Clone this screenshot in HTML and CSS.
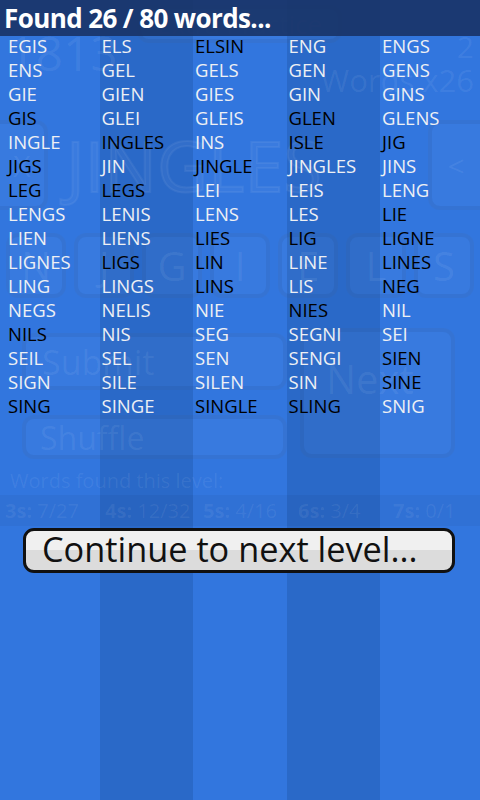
FILE: index.html
```html
<!DOCTYPE html>
<html>
<head>
<meta charset="utf-8">
<link rel="stylesheet" href="styles.css">
</head>
<body>
<div class="game">
  <div class="hdr">
    <div class="score">1813</div>
    <div class="gbtn xp">Extra Practice</div>
    <div class="right"><div class="lvl">2</div><div class="mult">Words x26</div></div>
  </div>
  <div class="wordrow">
    <div class="gbtn side">X</div>
    <div class="big">JINGLES</div>
    <div class="gbtn side r">&lt;</div>
  </div>
  <div class="tiles">
    <div class="gbtn tile">N</div><div class="gbtn tile">J</div><div class="gbtn tile">G</div><div class="gbtn tile">I</div><div class="gbtn tile">E</div><div class="gbtn tile">L</div><div class="gbtn tile">S</div>
  </div>
  <div class="actions">
    <div class="lcol">
      <div class="gbtn submit">Submit</div>
      <div class="gbtn shuffle">Shuffle</div>
    </div>
    <div class="gbtn next">Next</div>
  </div>
  <div class="found">Words found this level:</div>
  <div class="stats">
    <span><b>3s:</b> 7/27</span><span><b>4s:</b> 12/32</span><span><b>5s:</b> 4/16</span><span><b>6s:</b> 3/4</span><span><b>7s:</b> 0/1</span>
  </div>
</div>
<div class="dialog">
  <div class="title">Found 26 / 80 words...</div>
  <div class="words">
    <span class="w">EGIS</span><span class="w">ELS</span><span class="k">ELSIN</span><span class="w">ENG</span><span class="w">ENGS</span>
    <span class="w">ENS</span><span class="w">GEL</span><span class="w">GELS</span><span class="w">GEN</span><span class="w">GENS</span>
    <span class="w">GIE</span><span class="w">GIEN</span><span class="w">GIES</span><span class="w">GIN</span><span class="w">GINS</span>
    <span class="k">GIS</span><span class="w">GLEI</span><span class="w">GLEIS</span><span class="k">GLEN</span><span class="w">GLENS</span>
    <span class="w">INGLE</span><span class="k">INGLES</span><span class="w">INS</span><span class="k">ISLE</span><span class="k">JIG</span>
    <span class="k">JIGS</span><span class="w">JIN</span><span class="k">JINGLE</span><span class="w">JINGLES</span><span class="w">JINS</span>
    <span class="k">LEG</span><span class="k">LEGS</span><span class="w">LEI</span><span class="w">LEIS</span><span class="w">LENG</span>
    <span class="w">LENGS</span><span class="w">LENIS</span><span class="w">LENS</span><span class="w">LES</span><span class="k">LIE</span>
    <span class="w">LIEN</span><span class="w">LIENS</span><span class="k">LIES</span><span class="k">LIG</span><span class="k">LIGNE</span>
    <span class="w">LIGNES</span><span class="k">LIGS</span><span class="k">LIN</span><span class="w">LINE</span><span class="k">LINES</span>
    <span class="w">LING</span><span class="w">LINGS</span><span class="k">LINS</span><span class="w">LIS</span><span class="k">NEG</span>
    <span class="w">NEGS</span><span class="w">NELIS</span><span class="w">NIE</span><span class="k">NIES</span><span class="w">NIL</span>
    <span class="k">NILS</span><span class="w">NIS</span><span class="w">SEG</span><span class="w">SEGNI</span><span class="w">SEI</span>
    <span class="w">SEIL</span><span class="w">SEL</span><span class="w">SEN</span><span class="w">SENGI</span><span class="k">SIEN</span>
    <span class="w">SIGN</span><span class="w">SILE</span><span class="w">SILEN</span><span class="w">SIN</span><span class="k">SINE</span>
    <span class="k">SING</span><span class="w">SINGE</span><span class="k">SINGLE</span><span class="k">SLING</span><span class="w">SNIG</span>
  </div>
  <div class="cont">Continue to next level...</div>
</div>
</body>
</html>
```
FILE: styles.css
```css
html, body {
  margin: 0;
  padding: 0;
}
body {
  width: 480px;
  height: 800px;
  overflow: hidden;
  position: relative;
  font-family: "Open Sans", "Noto Sans", sans-serif;
  background: linear-gradient(to right,
    #3276de 0, #3276de 100px,
    #2a69c8 100px, #2a69c8 193px,
    #3276de 193px, #3276de 287px,
    #2a69c8 287px, #2a69c8 380px,
    #3276de 380px);
}

/* ghost game screen */
.game {
  color: rgba(255, 255, 255, 0.07);
}
.gbtn {
  box-sizing: border-box;
  background: rgba(255, 255, 255, 0.03);
  border: 4px solid rgba(0, 0, 0, 0.05);
  border-radius: 12px;
  display: flex;
  align-items: center;
}
.hdr {
  display: grid;
  grid-template-columns: 137px 205px 1fr;
  height: 120px;
}
.score {
  grid-row: 1;
  grid-column: 1;
  font-size: 48px;
  line-height: 50px;
  margin-top: 28px;
  padding-left: 8px;
}
.xp {
  grid-row: 1;
  grid-column: 2;
  align-self: start;
  margin-top: 5px;
  height: 38px;
  justify-content: center;
  font-size: 26px;
  white-space: nowrap;
}
.right {
  grid-row: 1;
  grid-column: 2 / 4;
  text-align: right;
  padding-right: 6px;
  white-space: nowrap;
}
.lvl {
  font-size: 30px;
  line-height: 34px;
  margin-top: 30px;
}
.mult {
  font-size: 31px;
  line-height: 32px;
}
.wordrow {
  display: grid;
  grid-template-columns: 48px 1fr 52px;
  height: 90px;
}
.side {
  justify-content: center;
  font-size: 30px;
  border-left: none;
  border-radius: 0 12px 12px 0;
}
.side.r {
  border-left: 4px solid rgba(0, 0, 0, 0.05);
  border-right: none;
  border-radius: 12px 0 0 12px;
}
.big {
  font-size: 70px;
  line-height: 90px;
  padding-left: 18px;
  color: rgba(255, 255, 255, 0.04);
  -webkit-text-stroke: 2px rgba(255, 255, 255, 0.06);
}
.tiles {
  display: flex;
  gap: 8px;
  padding: 0 6px;
  margin-top: 23px;
  height: 65px;
}
.tile {
  flex: 1;
  justify-content: center;
  font-size: 40px;
}
.actions {
  display: grid;
  grid-template-columns: 265px 155px;
  column-gap: 13px;
  padding-left: 22px;
  margin-top: 30px;
}
.lcol {
  display: flex;
  flex-direction: column;
  gap: 25px;
}
.submit {
  height: 57px;
  font-size: 34px;
  padding-left: 16px;
  margin-top: 5px;
}
.shuffle {
  height: 44px;
  font-size: 32px;
  padding-left: 14px;
}
.next {
  height: 130px;
  font-size: 40px;
  padding: 0 0 30px 22px;
}
.found {
  font-size: 20px;
  line-height: 28px;
  padding-left: 10px;
  margin-top: 8px;
}
.stats {
  display: grid;
  grid-template-columns: 100px 98px 95px 95px 1fr;
  background: rgba(0, 0, 0, 0.04);
  height: 31px;
  font-size: 20px;
  line-height: 31px;
  padding-left: 5px;
}

/* dialog overlay */
.dialog {
  position: absolute;
  top: 0;
  left: 0;
  right: 0;
  bottom: 0;
}
.title {
  height: 36px;
  background: rgba(24, 51, 102, 0.9);
  color: #fff;
  font-weight: bold;
  font-size: 26px;
  line-height: 36px;
  padding-left: 4px;
  letter-spacing: -0.6px;
  white-space: nowrap;
}
.words {
  display: grid;
  grid-template-columns: repeat(5, 93.5px);
  padding-left: 8px;
  margin-top: -2px;
  font-size: 18.5px;
  line-height: 24px;
}
.w { color: #eef0f4; }
.k { color: #000; }
.cont {
  box-sizing: border-box;
  width: 432px;
  height: 45px;
  margin: 110px 0 0 23px;
  border: 3px solid #111;
  border-radius: 11px;
  background: linear-gradient(#f0f0f0 0, #f0f0f0 50%, #dcdcdc 50%, #dcdcdc 100%);
  color: #111;
  font-size: 34.3px;
  line-height: 35px;
  padding: 0 0 4px 16px;
  white-space: nowrap;
}
```
